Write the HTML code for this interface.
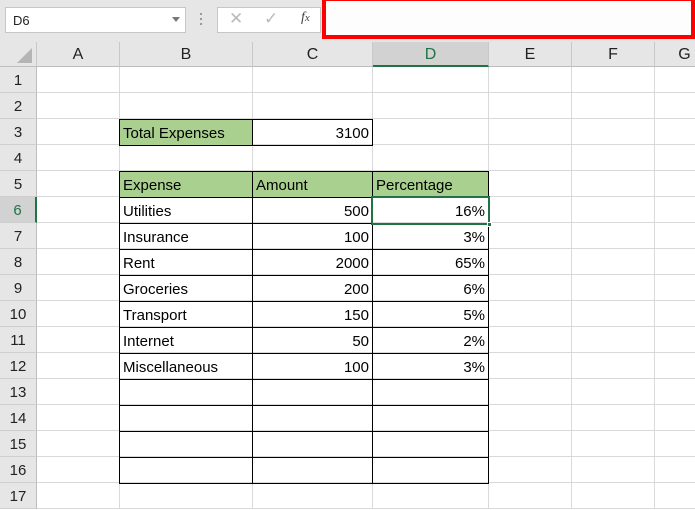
<!DOCTYPE html>
<html><head><meta charset="utf-8"><style>
*{margin:0;padding:0;box-sizing:border-box}
body{width:695px;height:509px;overflow:hidden;background:#fff;font-family:"Liberation Sans",sans-serif;position:relative}
.a{position:absolute}
.top{left:0;top:0;width:695px;height:67px;background:#e6e6e6}
.nb{left:5px;top:7px;width:181px;height:26px;background:#fff;border:1px solid #c6c6c6;font-size:13px;padding:5px 0 0 7px;color:#222}
.fx{left:217px;top:7px;width:104px;height:26px;background:#fff;border:1px solid #c6c6c6}
.red{left:322px;top:-3px;width:373px;height:42px;border:4px solid #f00;background:#fdfdfd}
.ch{top:42px;height:25px;background:#e6e6e6;border-right:1px solid #c8c8c8;border-bottom:1px solid #bdbdbd;text-align:center;font-size:16px;line-height:26px;color:#222}
.rh{left:0;width:37px;height:26px;background:#e6e6e6;border-right:1px solid #bdbdbd;border-bottom:1px solid #cfcfcf;text-align:center;font-size:15px;line-height:27px;color:#222}
.grid{left:37px;top:67px;width:658px;height:442px;background:repeating-linear-gradient(to bottom,transparent 0 25px,#d9d9d9 25px 26px)}
.vl{top:67px;width:1px;height:442px;background:#d9d9d9}
.c{position:absolute;height:27px;border:1px solid #000;font-size:15px;line-height:27px;padding:0 3px;color:#000;white-space:nowrap}
.g{background:#a9d08e}
.r{text-align:right}
</style></head><body>
<div class="a top"></div>
<div class="a nb">D6</div>
<div class="a" style="left:172px;top:17px;width:0;height:0;border-left:4px solid transparent;border-right:4px solid transparent;border-top:5px solid #777"></div>
<div class="a" style="left:200px;top:13px;width:2px;height:2px;background:#999;box-shadow:0 5px #999,0 10px #999"></div>
<div class="a fx"></div>
<div class="a" style="left:229px;top:9px;font-size:17px;color:#bbb">✕</div>
<div class="a" style="left:264px;top:9px;font-size:17px;color:#bbb">✓</div>
<div class="a" style="left:301px;top:10px;font-size:14px;font-style:italic;font-family:'Liberation Serif',serif;color:#444">f<span style="font-size:11px">x</span></div>
<div class="a red"></div>

<div class="a ch" style="left:0;width:37px"></div>
<div class="a" style="left:17px;top:48px;width:0;height:0;border-left:15px solid transparent;border-bottom:15px solid #b4b4b4"></div>
<div class="a ch" style="left:37px;width:83px">A</div>
<div class="a ch" style="left:120px;width:133px">B</div>
<div class="a ch" style="left:253px;width:120px">C</div>
<div class="a ch" style="left:373px;width:116px;background:#d2d2d2;border-bottom:2px solid #217346;color:#217346">D</div>
<div class="a ch" style="left:489px;width:83px">E</div>
<div class="a ch" style="left:572px;width:83px">F</div>
<div class="a ch" style="left:655px;width:60px">G</div>

<div class="a grid"></div>
<div class="a vl" style="left:119px"></div>
<div class="a vl" style="left:252px"></div>
<div class="a vl" style="left:372px"></div>
<div class="a vl" style="left:488px"></div>
<div class="a vl" style="left:571px"></div>
<div class="a vl" style="left:654px"></div>

<div class="a rh" style="top:67px">1</div>
<div class="a rh" style="top:93px">2</div>
<div class="a rh" style="top:119px">3</div>
<div class="a rh" style="top:145px">4</div>
<div class="a rh" style="top:171px">5</div>
<div class="a rh" style="top:197px;background:#d2d2d2;border-right:2px solid #217346;color:#217346">6</div>
<div class="a rh" style="top:223px">7</div>
<div class="a rh" style="top:249px">8</div>
<div class="a rh" style="top:275px">9</div>
<div class="a rh" style="top:301px">10</div>
<div class="a rh" style="top:327px">11</div>
<div class="a rh" style="top:353px">12</div>
<div class="a rh" style="top:379px">13</div>
<div class="a rh" style="top:405px">14</div>
<div class="a rh" style="top:431px">15</div>
<div class="a rh" style="top:457px">16</div>
<div class="a rh" style="top:483px">17</div>

<div class="c g" style="left:119px;top:119px;width:134px">Total Expenses</div>
<div class="c r" style="left:252px;top:119px;width:121px">3100</div>

<div class="c g" style="left:119px;top:171px;width:134px">Expense</div>
<div class="c g" style="left:252px;top:171px;width:121px">Amount</div>
<div class="c g" style="left:372px;top:171px;width:117px">Percentage</div>

<div class="c" style="left:119px;top:197px;width:134px">Utilities</div>
<div class="c r" style="left:252px;top:197px;width:121px">500</div>
<div class="c r" style="left:372px;top:197px;width:117px">16%</div>
<div class="c" style="left:119px;top:223px;width:134px">Insurance</div>
<div class="c r" style="left:252px;top:223px;width:121px">100</div>
<div class="c r" style="left:372px;top:223px;width:117px">3%</div>
<div class="c" style="left:119px;top:249px;width:134px">Rent</div>
<div class="c r" style="left:252px;top:249px;width:121px">2000</div>
<div class="c r" style="left:372px;top:249px;width:117px">65%</div>
<div class="c" style="left:119px;top:275px;width:134px">Groceries</div>
<div class="c r" style="left:252px;top:275px;width:121px">200</div>
<div class="c r" style="left:372px;top:275px;width:117px">6%</div>
<div class="c" style="left:119px;top:301px;width:134px">Transport</div>
<div class="c r" style="left:252px;top:301px;width:121px">150</div>
<div class="c r" style="left:372px;top:301px;width:117px">5%</div>
<div class="c" style="left:119px;top:327px;width:134px">Internet</div>
<div class="c r" style="left:252px;top:327px;width:121px">50</div>
<div class="c r" style="left:372px;top:327px;width:117px">2%</div>
<div class="c" style="left:119px;top:353px;width:134px">Miscellaneous</div>
<div class="c r" style="left:252px;top:353px;width:121px">100</div>
<div class="c r" style="left:372px;top:353px;width:117px">3%</div>
<div class="c" style="left:119px;top:379px;width:134px"></div>
<div class="c" style="left:252px;top:379px;width:121px"></div>
<div class="c" style="left:372px;top:379px;width:117px"></div>
<div class="c" style="left:119px;top:405px;width:134px"></div>
<div class="c" style="left:252px;top:405px;width:121px"></div>
<div class="c" style="left:372px;top:405px;width:117px"></div>
<div class="c" style="left:119px;top:431px;width:134px"></div>
<div class="c" style="left:252px;top:431px;width:121px"></div>
<div class="c" style="left:372px;top:431px;width:117px"></div>
<div class="c" style="left:119px;top:457px;width:134px"></div>
<div class="c" style="left:252px;top:457px;width:121px"></div>
<div class="c" style="left:372px;top:457px;width:117px"></div>

<div class="a" style="left:371px;top:196px;width:119px;height:29px;border:2px solid #217346"></div>
<div class="a" style="left:487px;top:222px;width:5px;height:5px;background:#217346;border:1px solid #fff"></div>
</body></html>
